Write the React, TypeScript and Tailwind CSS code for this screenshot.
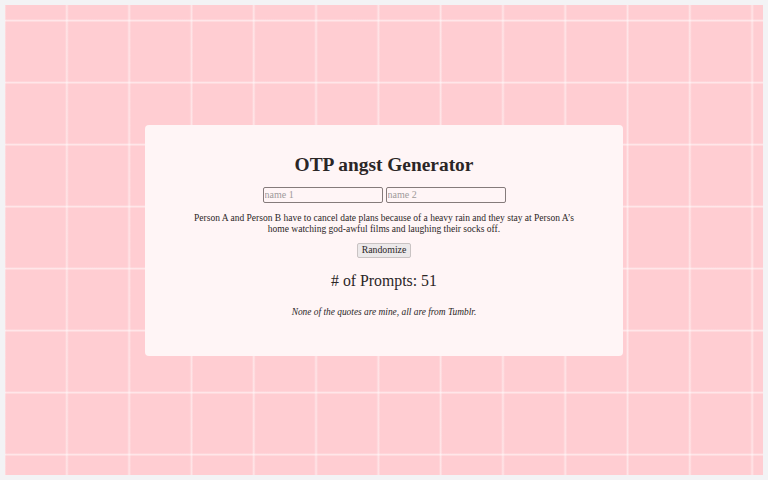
import { useState } from 'react';

const prompts = [
  'Person A and Person B have to cancel date plans because of a heavy rain and they stay at Person A\u2019s home watching god-awful films and laughing their socks off.',
];

function App() {
  const [name1, setName1] = useState('');
  const [name2, setName2] = useState('');
  const [prompt] = useState(prompts[0]);

  const a = name1 || 'Person A';
  const b = name2 || 'Person B';
  const text = prompt.replace(/Person A/g, a).replace(/Person B/g, b);

  return (
    <div className="w-[768px] h-[480px] bg-[#f3f3f5] p-[5px] font-['Liberation_Serif',serif] text-[#2b2626]">
      <div className="w-full h-full flex items-center justify-center bg-[#ffcdd2] bg-[linear-gradient(90deg,transparent_0,rgba(255,255,255,0.5)_1.5px,transparent_3.5px),linear-gradient(transparent_0,rgba(255,255,255,0.5)_1.5px,transparent_3.5px)] bg-[size:62.3px_62px] bg-[position:-2px_14px]">
        <div className="w-[478px] h-[231px] rounded-[4px] bg-[#fff5f6] flex flex-col items-center">
          <h1 className="mt-[28px] text-[19.4px] leading-[24px] font-bold">OTP angst Generator</h1>
          <div className="mt-[10px] flex gap-[3px]">
            <input
              value={name1}
              onChange={(e) => setName1(e.target.value)}
              placeholder="name 1"
              className="w-[120px] h-[16px] border border-[#857b7b] rounded-[2px] bg-transparent px-[1px] text-[10px] placeholder:text-[#a09a9a] outline-none"
            />
            <input
              value={name2}
              onChange={(e) => setName2(e.target.value)}
              placeholder="name 2"
              className="w-[120px] h-[16px] border border-[#857b7b] rounded-[2px] bg-transparent px-[1px] text-[10px] placeholder:text-[#a09a9a] outline-none"
            />
          </div>
          <p className="mt-[10px] w-[392px] text-center text-[9.5px] leading-[11px]">{text}</p>
          <button className="mt-[8px] h-[15px] px-[4px] border border-[#c9c3c3] rounded-[2px] bg-[#ece9ea] text-[9.8px] leading-none">
            Randomize
          </button>
          <div className="mt-[13px] text-[15.8px] leading-[19px]"># of Prompts: {prompts.length + 50}</div>
          <p className="mt-[15px] text-[9.4px] italic">None of the quotes are mine, all are from Tumblr.</p>
        </div>
      </div>
    </div>
  );
}

export default App;
